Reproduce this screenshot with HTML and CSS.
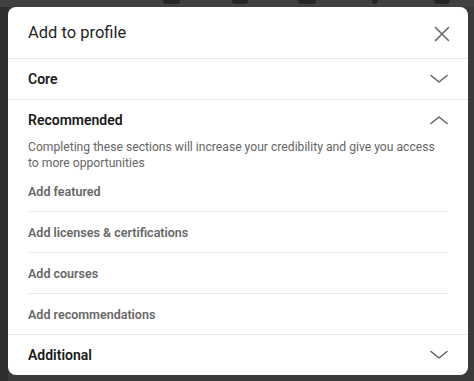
FILE: index.html
```html
<!DOCTYPE html>
<html>
<head>
<meta charset="utf-8">
<link rel="stylesheet" href="styles.css">
</head>
<body>
<div class="backdrop">
  <div class="topbar">
    <span class="nav-ic ic1"></span>
    <span class="nav-ic ic2"></span>
    <span class="nav-ic ic3"></span>
    <span class="nav-ic ic4"></span>
    <span class="nav-ic ic5"></span>
  </div>
  <div class="modal">
    <div class="modal-header">
      <h2 class="modal-title">Add to profile</h2>
      <svg class="close" width="16" height="16" viewBox="0 0 16 16"><path d="M1.5 1.5 L14.5 14.5 M14.5 1.5 L1.5 14.5" stroke="#666" stroke-width="1.6" fill="none" stroke-linecap="round"/></svg>
    </div>
    <div class="section">
      <div class="section-head">
        <span class="section-title">Core</span>
        <svg class="chev" width="18" height="10" viewBox="0 0 18 10"><path d="M1 1.5 L9 8 L17 1.5" stroke="#666" stroke-width="1.6" fill="none" stroke-linecap="round" stroke-linejoin="round"/></svg>
      </div>
    </div>
    <div class="section">
      <div class="section-head rec">
        <span class="section-title">Recommended</span>
        <svg class="chev" width="18" height="10" viewBox="0 0 18 10"><path d="M1 8.5 L9 2 L17 8.5" stroke="#666" stroke-width="1.6" fill="none" stroke-linecap="round" stroke-linejoin="round"/></svg>
      </div>
      <p class="section-desc">Completing these sections will increase your credibility and give you access to more opportunities</p>
      <ul class="items">
        <li class="item">Add featured</li>
        <li class="item">Add licenses &amp; certifications</li>
        <li class="item">Add courses</li>
        <li class="item">Add recommendations</li>
      </ul>
    </div>
    <div class="section last">
      <div class="section-head">
        <span class="section-title">Additional</span>
        <svg class="chev" width="18" height="10" viewBox="0 0 18 10"><path d="M1 1.5 L9 8 L17 1.5" stroke="#666" stroke-width="1.6" fill="none" stroke-linecap="round" stroke-linejoin="round"/></svg>
      </div>
    </div>
  </div>
</div>
</body>
</html>
```
FILE: styles.css
```css
* { box-sizing: border-box; }
html, body {
  margin: 0;
  padding: 0;
  width: 474px;
  height: 381px;
  overflow: hidden;
  background: #3a3a3a;
  font-family: Roboto, "Liberation Sans", sans-serif;
}
.backdrop {
  position: relative;
  width: 474px;
  height: 381px;
  padding: 7px 6px 6px 8px;
  background: linear-gradient(to right, #2e2e2e 0, #2e2e2e 8px, #3a3a3a 8px);
}
.topbar {
  position: absolute;
  left: 0;
  top: 0;
  width: 474px;
  height: 7px;
  background: #404040;
}
.nav-ic {
  position: absolute;
  top: 0;
  height: 4px;
  background: #262626;
  border-radius: 0 0 3px 3px;
}
.ic1 { left: 163px; width: 17px; }
.ic2 { left: 232px; width: 16px; }
.ic3 { left: 298px; width: 18px; }
.ic4 { left: 372px; width: 6px; }
.ic5 { left: 434px; width: 16px; }
.modal {
  position: relative;
  width: 460px;
  height: 368px;
  background: #fff;
  border-radius: 8px;
  overflow: hidden;
  display: flex;
  flex-direction: column;
}
.modal-header {
  height: 52px;
  display: flex;
  align-items: center;
  justify-content: space-between;
  padding: 0 18px 0 20px;
  border-bottom: 1px solid #e8e8e8;
}
.modal-title {
  margin: 0;
  font-size: 16.5px;
  font-weight: 400;
  color: #1f1f1f;
}
.close { display: block; margin-top: 2px; }
.section {
  border-bottom: 1px solid #e8e8e8;
}
.section.last { border-bottom: none; }
.section-head {
  height: 40px;
  display: flex;
  align-items: center;
  justify-content: space-between;
  padding: 0 20px 0 20px;
}
.section-head.rec { height: 39px; }
.section-title {
  font-size: 14px;
  font-weight: 600;
  color: #1a1a1a;
}
.chev { display: block; }
.section-desc {
  margin: 0;
  padding: 0 20px;
  font-size: 12.15px;
  line-height: 16px;
  color: #666;
}
.items {
  list-style: none;
  margin: 0;
  padding: 0 20px;
}
.item {
  height: 41px;
  display: flex;
  align-items: center;
  font-size: 12.5px;
  font-weight: 600;
  color: #666;
  border-bottom: 1px solid #ececec;
}
.item:last-child { border-bottom: none; height: 40px; }
.section.last .section-head { height: 39px; }
```
